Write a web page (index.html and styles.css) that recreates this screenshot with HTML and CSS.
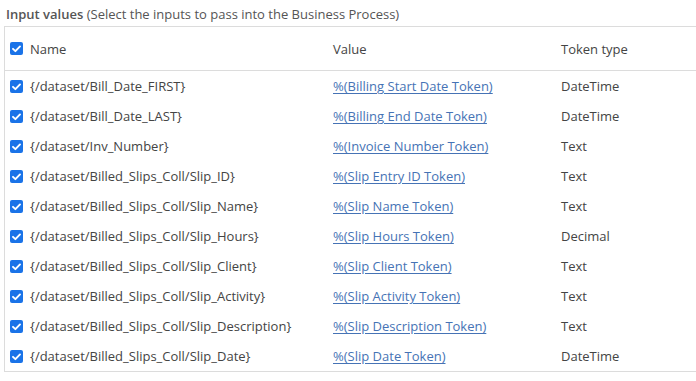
FILE: index.html
```html
<!DOCTYPE html>
<html>
<head>
<meta charset="utf-8">
<link rel="stylesheet" href="styles.css">
</head>
<body>
<div class="panel">
  <div class="title"><b>Input values</b> (Select the inputs to pass into the Business Process)</div>
  <div class="table">
    <div class="row head">
      <div class="c-name"><span class="cb"><svg viewBox="0 0 13 13"><path d="M3 6.8 L5.4 9.2 L10 4.4" fill="none" stroke="#fff" stroke-width="1.9" stroke-linecap="round" stroke-linejoin="round"/></svg></span>Name</div>
      <div class="c-val">Value</div>
      <div class="c-type">Token type</div>
    </div>
    <div class="body">
      <div class="row"><div class="c-name"><span class="cb"><svg viewBox="0 0 13 13"><path d="M3 6.8 L5.4 9.2 L10 4.4" fill="none" stroke="#fff" stroke-width="1.9" stroke-linecap="round" stroke-linejoin="round"/></svg></span>{/dataset/Bill_Date_FIRST}</div><div class="c-val"><a href="#">%(Billing Start Date Token)</a></div><div class="c-type">DateTime</div></div>
      <div class="row"><div class="c-name"><span class="cb"><svg viewBox="0 0 13 13"><path d="M3 6.8 L5.4 9.2 L10 4.4" fill="none" stroke="#fff" stroke-width="1.9" stroke-linecap="round" stroke-linejoin="round"/></svg></span>{/dataset/Bill_Date_LAST}</div><div class="c-val"><a href="#">%(Billing End Date Token)</a></div><div class="c-type">DateTime</div></div>
      <div class="row"><div class="c-name"><span class="cb"><svg viewBox="0 0 13 13"><path d="M3 6.8 L5.4 9.2 L10 4.4" fill="none" stroke="#fff" stroke-width="1.9" stroke-linecap="round" stroke-linejoin="round"/></svg></span>{/dataset/Inv_Number}</div><div class="c-val"><a href="#">%(Invoice Number Token)</a></div><div class="c-type">Text</div></div>
      <div class="row"><div class="c-name"><span class="cb"><svg viewBox="0 0 13 13"><path d="M3 6.8 L5.4 9.2 L10 4.4" fill="none" stroke="#fff" stroke-width="1.9" stroke-linecap="round" stroke-linejoin="round"/></svg></span>{/dataset/Billed_Slips_Coll/Slip_ID}</div><div class="c-val"><a href="#">%(Slip Entry ID Token)</a></div><div class="c-type">Text</div></div>
      <div class="row"><div class="c-name"><span class="cb"><svg viewBox="0 0 13 13"><path d="M3 6.8 L5.4 9.2 L10 4.4" fill="none" stroke="#fff" stroke-width="1.9" stroke-linecap="round" stroke-linejoin="round"/></svg></span>{/dataset/Billed_Slips_Coll/Slip_Name}</div><div class="c-val"><a href="#">%(Slip Name Token)</a></div><div class="c-type">Text</div></div>
      <div class="row"><div class="c-name"><span class="cb"><svg viewBox="0 0 13 13"><path d="M3 6.8 L5.4 9.2 L10 4.4" fill="none" stroke="#fff" stroke-width="1.9" stroke-linecap="round" stroke-linejoin="round"/></svg></span>{/dataset/Billed_Slips_Coll/Slip_Hours}</div><div class="c-val"><a href="#">%(Slip Hours Token)</a></div><div class="c-type">Decimal</div></div>
      <div class="row"><div class="c-name"><span class="cb"><svg viewBox="0 0 13 13"><path d="M3 6.8 L5.4 9.2 L10 4.4" fill="none" stroke="#fff" stroke-width="1.9" stroke-linecap="round" stroke-linejoin="round"/></svg></span>{/dataset/Billed_Slips_Coll/Slip_Client}</div><div class="c-val"><a href="#">%(Slip Client Token)</a></div><div class="c-type">Text</div></div>
      <div class="row"><div class="c-name"><span class="cb"><svg viewBox="0 0 13 13"><path d="M3 6.8 L5.4 9.2 L10 4.4" fill="none" stroke="#fff" stroke-width="1.9" stroke-linecap="round" stroke-linejoin="round"/></svg></span>{/dataset/Billed_Slips_Coll/Slip_Activity}</div><div class="c-val"><a href="#">%(Slip Activity Token)</a></div><div class="c-type">Text</div></div>
      <div class="row"><div class="c-name"><span class="cb"><svg viewBox="0 0 13 13"><path d="M3 6.8 L5.4 9.2 L10 4.4" fill="none" stroke="#fff" stroke-width="1.9" stroke-linecap="round" stroke-linejoin="round"/></svg></span>{/dataset/Billed_Slips_Coll/Slip_Description}</div><div class="c-val"><a href="#">%(Slip Description Token)</a></div><div class="c-type">Text</div></div>
      <div class="row"><div class="c-name"><span class="cb"><svg viewBox="0 0 13 13"><path d="M3 6.8 L5.4 9.2 L10 4.4" fill="none" stroke="#fff" stroke-width="1.9" stroke-linecap="round" stroke-linejoin="round"/></svg></span>{/dataset/Billed_Slips_Coll/Slip_Date}</div><div class="c-val"><a href="#">%(Slip Date Token)</a></div><div class="c-type">DateTime</div></div>
    </div>
  </div>
</div>
</body>
</html>
```
FILE: styles.css
```css
html, body {
  margin: 0;
  padding: 0;
  background: #fff;
}
body {
  font-family: "Open Sans", "Noto Sans", sans-serif;
  font-size: 13px;
  color: #444;
  overflow: hidden;
}
.panel {
  padding: 6px 0 0 4px;
}
.title {
  color: #555;
  padding-left: 2px;
  height: 20px;
  line-height: 17px;
}
.title b {
  font-weight: 600;
}
.table {
  border: 1px solid #dcdcdc;
  border-right: none;
  margin-right: -20px;
}
.row {
  display: grid;
  grid-template-columns: 328px 228px 1fr;
  align-items: center;
  height: 30px;
}
.row.head {
  height: 43px;
  border-bottom: 1px solid #dcdcdc;
}
.c-name {
  display: flex;
  align-items: center;
  padding-left: 5px;
  white-space: nowrap;
}
.c-val, .c-type {
  white-space: nowrap;
}
.cb {
  width: 13px;
  height: 13px;
  border-radius: 2px;
  background: #1a73e8;
  margin-right: 7px;
  display: inline-flex;
}
.cb svg {
  width: 13px;
  height: 13px;
}
a {
  color: #4673b5;
  text-decoration: underline;
  text-underline-offset: 2px;
}
```
